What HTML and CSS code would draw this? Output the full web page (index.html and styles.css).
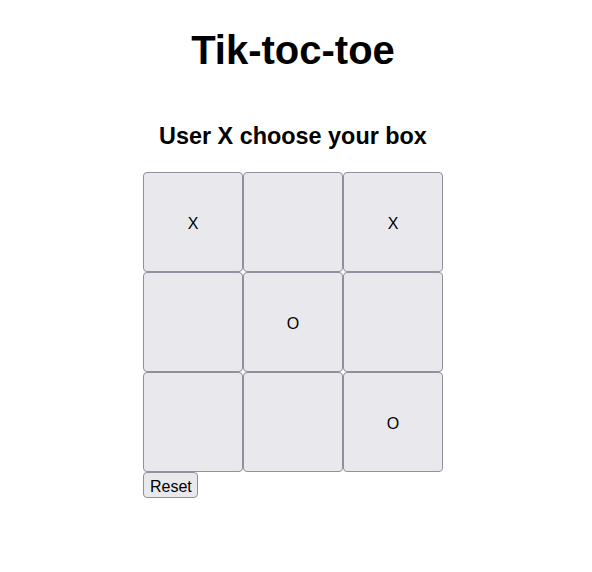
FILE: index.html
```html
<!DOCTYPE html>
<html lang="en">
<head>
    <meta charset="UTF-8">
    <meta name="viewport" content="width=device-width, initial-scale=1.0">
    <title>Tik-toc-toe</title>
    <link rel="stylesheet" href="styles.css">
</head>
<body>
    <h1 class="title">Tik-toc-toe</h1>
    <div class="game">
        <h2 class="turn" id="turn">User X choose your box</h2>
        <div class="board" id="board">
            <button class="box">X</button>
            <button class="box"></button>
            <button class="box">X</button>
            <button class="box"></button>
            <button class="box">O</button>
            <button class="box"></button>
            <button class="box"></button>
            <button class="box"></button>
            <button class="box">O</button>
        </div>
        <button class="reset" id="reset">Reset</button>
    </div>
</body>
</html>
```

FILE: styles.css
```css
body {
    margin: 8px 14px 8px 8px;
    font-family: "Liberation Sans", Arial, sans-serif;
    text-align: center;
}

.title {
    font-size: 40px;
    margin: 20px 0 26px;
}

.game {
    width: 300px;
    margin: 0 auto;
    text-align: left;
}

.turn {
    font-size: 23.4px;
    text-align: center;
    white-space: nowrap;
    margin: 50px -50px 22px;
}

.board {
    display: grid;
    grid-template-columns: repeat(3, 100px);
    grid-template-rows: repeat(3, 100px);
}

button {
    font-family: "Liberation Sans", Arial, sans-serif;
    font-size: 16px;
    color: #000;
    background-color: #e9e9ed;
    border: 1px solid #8f8f9d;
    border-radius: 4px;
    box-sizing: border-box;
}

.box {
    width: 100px;
    height: 100px;
    padding: 3px 0 0;
}

.reset {
    height: 26px;
    padding: 3px 6px 0;
    width: 55px;
}
```
